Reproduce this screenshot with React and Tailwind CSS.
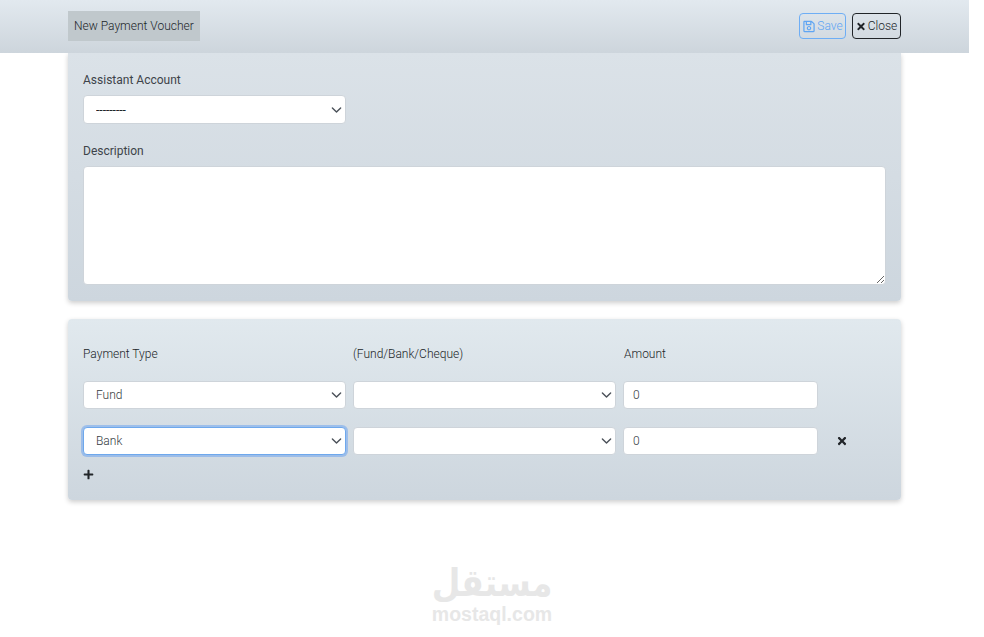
import React from "react";
import { FaRegSave, FaTimes, FaPlus } from "react-icons/fa";

function Chevron() {
  return (
    <svg viewBox="0 0 16 16" className="pointer-events-none absolute right-[4px] top-1/2 h-[11px] w-[11px] -translate-y-1/2" fill="none" stroke="#4a5058" strokeWidth="2" strokeLinecap="round" strokeLinejoin="round">
      <path d="M2 5l6 6 6-6" />
    </svg>
  );
}

function Select({ value, focus, h = "h-[27.6px]", text = "text-[12px] font-light text-[#343a40]" }) {
  return (
    <div className={`relative w-[263px] shrink-0 ${h}`}>
      <select
        defaultValue={value}
        className={`block h-full w-full appearance-none rounded-[4px] border bg-white pl-[12px] ${text} outline-none ${focus ? "border-[#6ea8ec] shadow-[0_0_0_2px_rgba(13,110,253,0.28)]" : "border-[#ced4da]"}`}
      >
        <option value={value}>{value}</option>
      </select>
      <Chevron />
    </div>
  );
}

function AmountInput({ h }) {
  return (
    <input
      defaultValue="0"
      className={`block w-[195px] shrink-0 rounded-[4px] border border-[#ced4da] bg-white pl-[9px] text-[12px] font-light text-[#343a40] outline-none ${h}`}
    />
  );
}

export default function App() {
  return (
    <div className="relative min-h-[637px] w-[984px] overflow-hidden bg-white font-['Roboto',sans-serif] text-[#212529]">
      <div className="relative z-10 flex h-[53px] w-[969px] items-start justify-between bg-gradient-to-b from-[#e2e9ef] to-[#cdd5dc] px-[68px]">
        <div className="mt-[11px] flex h-[30px] w-[132px] items-center bg-[#c0c8cc] pl-[6px] text-[12px] font-light">New Payment Voucher</div>
        <div className="mt-[13px] flex gap-[6px]">
          <button className="flex h-[26px] w-[47px] items-center justify-center gap-[2px] rounded-[4px] border border-[#6eaef5] pl-px text-[12px] font-light text-[#5fa5f3]">
            <FaRegSave className="h-[13px] w-[12px]" />
            <span>Save</span>
          </button>
          <button className="flex h-[26px] w-[49px] items-center justify-center gap-[2px] rounded-[4px] border border-[#212529] text-[12px] font-light text-[#212529]">
            <FaTimes className="h-[11px] w-[10px]" />
            <span>Close</span>
          </button>
        </div>
      </div>

      <div className="ml-[68px] w-[833px] rounded-b-[4px] bg-gradient-to-b from-[#dbe2e8] to-[#cdd6de] px-[15px] pb-[16px] pt-[19px] shadow-[0_2px_5px_rgba(0,0,0,0.2)]">
        <label className="block h-[16px] text-[12px] leading-[16px] text-[#3d4349]">Assistant Account</label>
        <div className="mt-[7px]">
          <Select value="---------" h="h-[29px]" text="text-[12px] font-normal text-[#212529]" />
        </div>
        <label className="mt-[19px] block h-[16px] text-[12px] leading-[16px] text-[#3d4349]">Description</label>
        <textarea className="mt-[7px] block h-[119px] w-[803px] rounded-[4px] border border-[#ced4da] bg-white outline-none" />
      </div>

      <div className="ml-[68px] mt-[18px] w-[833px] rounded-[4px] bg-gradient-to-b from-[#e1e9ee] to-[#cdd6de] px-[15px] pb-[19px] pt-[27px] shadow-[0_2px_5px_rgba(0,0,0,0.2)]">
        <div className="flex h-[16px] text-[12px] font-light leading-[16px]">
          <span className="w-[270px]">Payment Type</span>
          <span className="w-[271px]">(Fund/Bank/Cheque)</span>
          <span>Amount</span>
        </div>
        <div className="mt-[19px] flex gap-[7px]">
          <Select value="Fund" />
          <Select value="" />
          <AmountInput h="h-[27.6px]" />
        </div>
        <div className="mt-[18.4px] flex items-center gap-[7px]">
          <Select value="Bank" focus h="h-[28px]" />
          <Select value="" h="h-[28px]" />
          <AmountInput h="h-[28px]" />
          <FaTimes className="ml-[12px] h-[12px] w-[10px] text-[#212529]" />
        </div>
        <div className="mt-[12.9px] flex h-[13px] items-center">
          <FaPlus className="h-[11px] w-[11px] text-[#212529]" />
        </div>
      </div>

      <div className="ml-[432px] mt-[67px] flex w-[120px] flex-col items-center">
        <span dir="rtl" lang="ar" className="inline-block h-[38px] origin-bottom scale-y-[1.15] font-['DejaVu_Sans',sans-serif] text-[33px] font-bold leading-[38px] text-[#e7e7e7]">مستقل</span>
        <span className="font-['Liberation_Sans',sans-serif] text-[19.5px] font-bold leading-[18px] text-[#e7e7e7]">mostaql.com</span>
      </div>
    </div>
  );
}
